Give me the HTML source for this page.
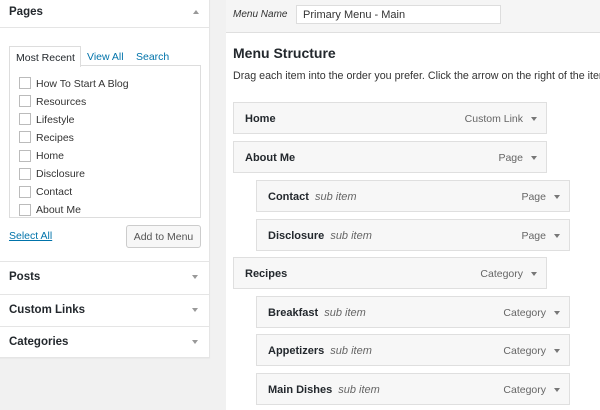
<!DOCTYPE html><html><head><style>
*{box-sizing:border-box;margin:0;padding:0}
body{width:600px;height:410px;overflow:hidden;background:#f1f1f1;font-family:"Liberation Sans",Arial,sans-serif;color:#23282d;position:relative;font-size:11px}
.abs{position:absolute}
#left{left:-1px;top:-2px;width:211px;height:360px;background:#fff;border:1px solid #e5e5e5;box-shadow:0 1px 1px rgba(0,0,0,.04)}
.sec{position:absolute;left:0;width:210px;border-top:1px solid #e5e5e5;height:33px;font-weight:bold;font-size:11.5px;padding:9px 9px}
.tri{position:absolute;right:12px;top:13px;width:0;height:0;border-left:3px solid transparent;border-right:3px solid transparent;border-top:4px solid #999}
.up{border-top:none;border-bottom:4px solid #999}
#right{left:226px;top:0;width:374px;height:410px;background:#fff}
.box{position:absolute;height:32px;background:#f7f7f7;border:1px solid #dfdfdf;font-weight:bold;font-size:11px;padding:10px 11px}
.box i{font-weight:normal;color:#666;margin-left:3px}
.box .t{position:absolute;right:23px;top:10px;font-weight:normal;color:#666;font-size:10.5px}
.box .tri{right:9px;top:14px;border-top-color:#777}
.cb{position:absolute;width:12px;height:12px;border:1px solid #bbb;background:#fff}
.lbl{position:absolute;font-size:10.5px;color:#333;white-space:nowrap}
</style></head><body>
<div id="left" class="abs">
 <div style="position:absolute;left:9px;top:7px;font-weight:bold;font-size:11.5px">Pages</div>
 <div class="tri up" style="right:10px;top:11px"></div>
 <div style="position:absolute;left:0;top:28px;width:210px;border-top:1px solid #e5e5e5"></div>
 <div style="position:absolute;left:9px;top:47px;width:72px;height:21px;border:1px solid #ddd;border-bottom:none;background:#fff;font-size:10.5px;padding:5px 0 0 6px;z-index:2;white-space:nowrap">Most Recent</div>
 <div style="position:absolute;left:87px;top:52px;color:#0073aa;font-size:10.5px">View All</div>
 <div style="position:absolute;left:136px;top:52px;color:#0073aa;font-size:10.5px">Search</div>
 <div style="position:absolute;left:9px;top:66px;width:192px;height:153px;border:1px solid #ddd;overflow:hidden">
  <div class="cb" style="left:9px;top:11px"></div><div class="lbl" style="left:26px;top:12px">How To Start A Blog</div>
  <div class="cb" style="left:9px;top:29px"></div><div class="lbl" style="left:26px;top:30px">Resources</div>
  <div class="cb" style="left:9px;top:47px"></div><div class="lbl" style="left:26px;top:48px">Lifestyle</div>
  <div class="cb" style="left:9px;top:65px"></div><div class="lbl" style="left:26px;top:66px">Recipes</div>
  <div class="cb" style="left:9px;top:84px"></div><div class="lbl" style="left:26px;top:84px">Home</div>
  <div class="cb" style="left:9px;top:102px"></div><div class="lbl" style="left:26px;top:102px">Disclosure</div>
  <div class="cb" style="left:9px;top:120px"></div><div class="lbl" style="left:26px;top:120px">Contact</div>
  <div class="cb" style="left:9px;top:138px"></div><div class="lbl" style="left:26px;top:138px">About Me</div>
 </div>
 <div style="position:absolute;left:9px;top:231px;color:#0073aa;text-decoration:underline;font-size:10.5px">Select All</div>
 <div style="position:absolute;left:126px;top:226px;width:75px;height:23px;border:1px solid #ccc;border-radius:3px;background:#f7f7f7;font-size:10.5px;padding:5px 0;text-align:center;color:#555">Add to Menu</div>
 <div class="sec" style="top:262px">Posts<div class="tri"></div></div>
 <div class="sec" style="top:295px">Custom Links<div class="tri"></div></div>
 <div class="sec" style="top:327px">Categories<div class="tri"></div></div>
</div>
<div id="right" class="abs">
 <div style="position:absolute;left:0;top:0;width:374px;height:33px;background:#f5f5f5;border-bottom:1px solid #dfdfdf"></div>
 <div style="position:absolute;left:7px;top:9px;font-style:italic;font-size:10px;color:#333">Menu Name</div>
 <div style="position:absolute;left:70px;top:5px;width:205px;height:19px;border:1px solid #ddd;background:#fff;font-size:11px;padding:3px 6px;color:#333">Primary Menu - Main</div>
 <div style="position:absolute;left:7px;top:45px;font-weight:bold;font-size:14px">Menu Structure</div>
 <div style="position:absolute;left:7px;top:70px;font-size:10.7px;white-space:nowrap;color:#333">Drag each item into the order you prefer. Click the arrow on the right of the item to</div>
</div>
<div class="box" style="left:233px;top:102px;width:314px">Home<span class="t">Custom Link</span><div class="tri"></div></div>
<div class="box" style="left:233px;top:141px;width:314px">About Me<span class="t">Page</span><div class="tri"></div></div>
<div class="box" style="left:256px;top:180px;width:314px">Contact <i>sub item</i><span class="t">Page</span><div class="tri"></div></div>
<div class="box" style="left:256px;top:219px;width:314px">Disclosure <i>sub item</i><span class="t">Page</span><div class="tri"></div></div>
<div class="box" style="left:233px;top:257px;width:314px">Recipes<span class="t">Category</span><div class="tri"></div></div>
<div class="box" style="left:256px;top:296px;width:314px">Breakfast <i>sub item</i><span class="t">Category</span><div class="tri"></div></div>
<div class="box" style="left:256px;top:334px;width:314px">Appetizers <i>sub item</i><span class="t">Category</span><div class="tri"></div></div>
<div class="box" style="left:256px;top:373px;width:314px">Main Dishes <i>sub item</i><span class="t">Category</span><div class="tri"></div></div>
</body></html>
